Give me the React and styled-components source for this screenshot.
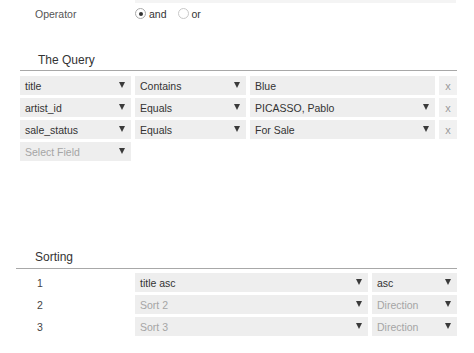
import styled, { createGlobalStyle } from "styled-components";

const GlobalStyle = createGlobalStyle`
  html, body {
    margin: 0;
    padding: 0;
    background: #fff;
  }
  body {
    font-family: "Liberation Sans", Arial, sans-serif;
    color: #333;
  }
`;

const queryRows = [
  { field: "title", op: "Contains", value: "Blue", valueSelect: false },
  { field: "artist_id", op: "Equals", value: "PICASSO, Pablo", valueSelect: true },
  { field: "sale_status", op: "Equals", value: "For Sale", valueSelect: true },
];

const sortRows = [
  { n: 1, sort: "title asc", dir: "asc" },
  { n: 2, sort: "", sortHint: "Sort 2", dir: "", dirHint: "Direction" },
  { n: 3, sort: "", sortHint: "Sort 3", dir: "", dirHint: "Direction" },
];

const Select = ({ value, placeholder, arrow = true }) => (
  <SelectBox $empty={!value}>
    <span>{value || placeholder}</span>
    {arrow && <Arrow />}
  </SelectBox>
);

const App = () => {
  return (
    <Page>
      <GlobalStyle />
      <TopStrip />

      <OperatorRow>
        <Label>Operator</Label>
        <RadioGroup>
          <RadioOption>
            <Radio $checked />
            and
          </RadioOption>
          <RadioOption>
            <Radio />
            or
          </RadioOption>
        </RadioGroup>
      </OperatorRow>

      <Heading $left={20} $pad={18} $height={46} $bottom={3}>The Query</Heading>

      <QueryGrid>
        {queryRows.map(row => (
          <QueryRow key={row.field}>
            <Select value={row.field} />
            <Select value={row.op} />
            <Select value={row.value} arrow={row.valueSelect} />
            <RemoveButton>x</RemoveButton>
          </QueryRow>
        ))}
        <QueryRow>
          <Select placeholder="Select Field" />
        </QueryRow>
      </QueryGrid>

      <SortSection>
        <Heading $left={16} $pad={19} $height={46} $bottom={4}>Sorting</Heading>
        <SortGrid>
          {sortRows.map(row => (
            <SortRow key={row.n}>
              <SortNumber>{row.n}</SortNumber>
              <Select value={row.sort} placeholder={row.sortHint} />
              <Select value={row.dir} placeholder={row.dirHint} />
            </SortRow>
          ))}
        </SortGrid>
      </SortSection>
    </Page>
  );
};

export default App;

const Page = styled.div`
  width: 474px;
  height: 353px;
  overflow: hidden;
  font-size: 10.5px;
`;

const TopStrip = styled.div`
  margin-left: 135px;
  width: 321px;
  height: 3px;
  background: #f4f4f4;
`;

const OperatorRow = styled.div`
  display: flex;
  align-items: center;
  height: 22px;
`;

const Label = styled.div`
  width: 100px;
  padding-left: 35px;
  color: #555;
`;

const RadioGroup = styled.div`
  display: flex;
  align-items: center;
  gap: 11px;
`;

const RadioOption = styled.label`
  display: flex;
  align-items: center;
  gap: 3px;
  color: #333;
`;

const Radio = styled.span`
  position: relative;
  width: 9px;
  height: 9px;
  margin-top: -1px;
  border: 1px solid ${props => props.$checked ? "#aaa" : "#c8c8c8"};
  border-radius: 50%;
  background: #fff;

  &::after {
    content: "";
    display: ${props => props.$checked ? "block" : "none"};
    position: absolute;
    left: 2.5px;
    top: 2.5px;
    width: 4px;
    height: 4px;
    border-radius: 50%;
    background: #333;
  }
`;

const Heading = styled.div`
  box-sizing: border-box;
  display: flex;
  align-items: flex-end;
  height: ${props => props.$height}px;
  margin-left: ${props => props.$left}px;
  width: ${props => 457 - props.$left}px;
  padding-left: ${props => props.$pad}px;
  padding-bottom: ${props => props.$bottom}px;
  border-bottom: 1px solid #a8a8a8;
  font-size: 12px;
  line-height: 14px;
  color: #333;
`;

const QueryGrid = styled.div`
  display: flex;
  flex-direction: column;
  gap: 3px;
  margin: 5px 0 0 20px;
  width: 437px;
`;

const QueryRow = styled.div`
  display: grid;
  grid-template-columns: 111px 111px 185px 18px;
  column-gap: 4px;
  height: 19px;
`;

const SelectBox = styled.div`
  display: flex;
  align-items: center;
  justify-content: space-between;
  padding: 0 5px 0 5px;
  background: #eeeeee;
  color: ${props => props.$empty ? "#a5a5a5" : "#333"};
  white-space: nowrap;
  overflow: hidden;
`;

const Arrow = styled.span`
  width: 0;
  height: 0;
  margin-top: -2px;
  margin-right: 1px;
  border-left: 3px solid transparent;
  border-right: 3px solid transparent;
  border-top: 6px solid #3a3a3a;
`;

const RemoveButton = styled.div`
  display: flex;
  align-items: center;
  justify-content: center;
  background: #f1f1f1;
  color: #9a9a9a;
  font-size: 11px;
`;

const SortSection = styled.div`
  margin-top: 62px;
`;

const SortGrid = styled.div`
  display: flex;
  flex-direction: column;
  gap: 3px;
  margin: 4px 0 0 16px;
  width: 441px;
`;

const SortRow = styled.div`
  display: grid;
  grid-template-columns: 115px 233px 85px;
  column-gap: 4px;
  height: 19px;
`;

const SortNumber = styled.div`
  display: flex;
  align-items: center;
  padding-left: 21px;
  color: #444;
`;
